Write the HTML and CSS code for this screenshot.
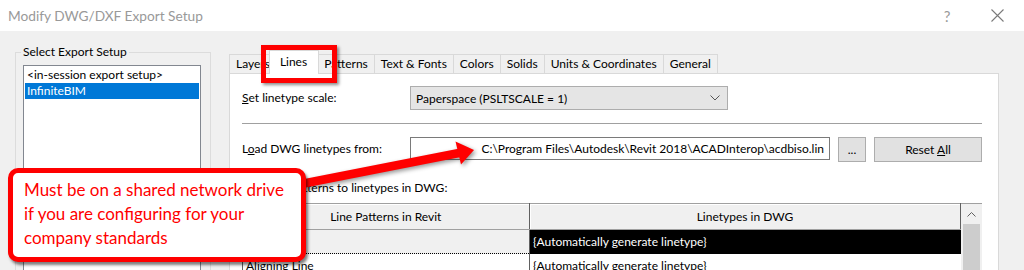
FILE: index.html
```html
<!DOCTYPE html>
<html lang="en">
<head>
    <meta charset="UTF-8">
    <title>Modify DWG/DXF Export Setup</title>
    <link rel="stylesheet" href="styles.css">
</head>
<body>
    <div class="dialog">
        <header class="titlebar">
            <span class="title">Modify DWG/DXF Export Setup</span>
            <span class="help">?</span>
            <span class="close">
                <svg width="13" height="13" viewBox="0 0 13 13"><path d="M0.5 0.5L12.5 12.5M12.5 0.5L0.5 12.5" stroke="#7a7a7a" stroke-width="1.1" fill="none"/></svg>
            </span>
        </header>

        <div class="content">
            <fieldset class="setup-group">
                <legend>Select Export Setup</legend>
                <ul class="setup-list">
                    <li>&lt;in-session export setup&gt;</li>
                    <li class="selected">InfiniteBIM</li>
                </ul>
            </fieldset>

            <section class="tabs">
                <nav class="tab-strip">
                    <span class="tab">Layers</span>
                    <span class="tab active">Lines<span class="mark"></span></span>
                    <span class="tab">Patterns</span>
                    <span class="tab">Text &amp; Fonts</span>
                    <span class="tab">Colors</span>
                    <span class="tab">Solids</span>
                    <span class="tab">Units &amp; Coordinates</span>
                    <span class="tab">General</span>
                </nav>
                <div class="panel">
                    <div class="field-row">
                        <label class="field-label"><u>S</u>et linetype scale:</label>
                        <div class="select">
                            <span>Paperspace (PSLTSCALE = 1)</span>
                            <svg width="10" height="6" viewBox="0 0 10 6"><path d="M0.5 0.5L5 5L9.5 0.5" stroke="#555" fill="none"/></svg>
                        </div>
                    </div>
                    <hr class="separator">
                    <div class="field-row">
                        <label class="field-label">L<u>o</u>ad DWG linetypes from:</label>
                        <div class="path-input">C:\Program Files\Autodesk\Revit 2018\ACADInterop\acdbiso.lin</div>
                        <button class="btn browse">...</button>
                        <button class="btn reset">Reset <u>A</u>ll</button>
                    </div>
                    <p class="map-label">Map line patterns to linetypes in DWG:</p>
                    <div class="grid-wrap">
                        <table class="map-table">
                            <colgroup><col class="col-revit"><col class="col-dwg"></colgroup>
                            <thead>
                                <tr><th>Line Patterns in Revit</th><th>Linetypes in DWG</th></tr>
                            </thead>
                            <tbody>
                                <tr><td class="focus"></td><td class="picked">{Automatically generate linetype}</td></tr>
                                <tr><td>Aligning Line</td><td>{Automatically generate linetype}</td></tr>
                            </tbody>
                        </table>
                        <div class="scrollbar">
                            <svg class="scroll-up" width="9" height="5" viewBox="0 0 9 5"><path d="M0.5 4.5L4.5 0.5L8.5 4.5" stroke="#606060" fill="none"/></svg>
                            <div class="thumb"></div>
                        </div>
                    </div>
                </div>
            </section>
        </div>

        <!-- annotation arrow, drawn over the dialog -->
        <svg class="arrow" width="1024" height="270" viewBox="0 0 1024 270">
            <line x1="296" y1="185" x2="459" y2="153" stroke="#f00" stroke-width="8.5"/>
            <polygon points="474,150 455.5,141.5 461,164.5" fill="#f00"/>
        </svg>

        <div class="callout">
            Must be on a shared network drive<br>
            if you are configuring for your<br>
            company standards
        </div>
    </div>
</body>
</html>
```

FILE: styles.css
```css
* {
    margin: 0;
    padding: 0;
    box-sizing: border-box;
}
body {
    font-family: Lato, "Liberation Sans", sans-serif;
    font-size: 12px;
    color: #000;
    background-color: #f0f0f0;
    overflow: hidden;
}
.dialog {
    position: relative;
    width: 1024px;
    height: 270px;
    overflow: hidden;
}
.titlebar {
    height: 31px;
    background-color: #fff;
    display: flex;
    align-items: center;
    padding-left: 8px;
}
.title {
    flex: 1;
    font-size: 13.7px;
    color: #999;
}
.help {
    width: 46px;
    text-align: center;
    font-size: 15px;
    color: #9a9a9a;
}
.close {
    width: 54px;
    display: flex;
    justify-content: center;
}
.content {
    display: flex;
    align-items: flex-start;
    padding-top: 13px;
}
.setup-group {
    margin-left: 15px;
    width: 196px;
    height: 260px;
    border: 1px solid #dcdcdc;
    padding: 0 0 0 5px;
}
.setup-group legend {
    padding: 0 2px;
    line-height: 16px;
}
.setup-list {
    list-style: none;
    margin: 5px 0 0 2px;
    width: 178px;
    height: 220px;
    background-color: #fff;
    border: 1px solid #828790;
    padding: 1px;
}
.setup-list li {
    height: 16px;
    line-height: 16px;
    padding-left: 2px;
}
.setup-list .selected {
    background-color: #0078d7;
    color: #fff;
}
.tabs {
    margin-left: 18px;
    padding-top: 6px;
    width: 770px;
}
.tab-strip {
    display: flex;
    align-items: flex-end;
    height: 23px;
}
.tab {
    position: relative;
    height: 19px;
    line-height: 18px;
    padding: 0 6px;
    background-color: #f0f0f0;
    border: 1px solid #d9d9d9;
    border-bottom: none;
    margin-right: -1px;
}
.tab.active {
    height: 24px;
    line-height: 22px;
    margin: 0 -2px -1px -7px;
    padding: 0 11px 0 10px;
    background-color: #fff;
    z-index: 2;
}
.mark {
    position: absolute;
    left: -9px;
    top: -6px;
    width: 76px;
    height: 38px;
    border: 5px solid #f00;
    box-shadow: 2px 2px 3px rgba(0,0,0,0.45);
}
.panel {
    background-color: #fff;
    border: 1px solid #d9d9d9;
    height: 210px;
    padding: 12px 16px 0 12px;
}
.field-row {
    display: flex;
    align-items: flex-start;
    gap: 8px;
}
.field-label {
    width: 160px;
    line-height: 23px;
}
.select {
    width: 318px;
    height: 24px;
    display: flex;
    align-items: center;
    justify-content: space-between;
    padding: 0 7px 0 5px;
    background-color: #e5e5e5;
    border: 1px solid #adadad;
}
.separator {
    border: none;
    border-top: 1px solid #a0a0a0;
    margin: 13px 0;
}
.path-input {
    width: 420px;
    height: 23px;
    line-height: 21px;
    text-align: right;
    padding-right: 5px;
    white-space: nowrap;
    overflow: hidden;
    background-color: #fff;
    border: 1px solid #7a7a7a;
}
.btn {
    height: 25px;
    font-family: inherit;
    font-size: 12px;
    background-color: #e1e1e1;
    border: 1px solid #adadad;
}
.browse {
    width: 28px;
}
.reset {
    width: 108px;
}
.map-label {
    margin-top: 18px;
    line-height: 16px;
}
.grid-wrap {
    display: flex;
    align-items: flex-start;
    margin-top: 7px;
    width: 740px;
}
.map-table {
    width: 719px;
    table-layout: fixed;
    border-collapse: collapse;
}
.col-revit {
    width: 287px;
}
.map-table th {
    height: 26px;
    padding: 0;
    font-weight: normal;
    background-color: #f0f0f0;
    border-top: 1px solid #a0a0a0;
    border-bottom: 1px solid #a0a0a0;
    border-right: 1px solid #606060;
    box-shadow: inset 1px 1px 0 #fff;
}
.map-table td {
    height: 24px;
    padding: 0 3px;
    line-height: 20px;
    white-space: nowrap;
}
.map-table td:first-child {
    border-left: 1px solid #606060;
    border-right: 1px solid #606060;
}
.map-table .focus {
    background-color: #f0f0f0;
    border-top: 1px dotted #000;
    border-bottom: 1px dotted #000;
}
.map-table .picked {
    background-color: #000;
    color: #fff;
}
.scrollbar {
    width: 21px;
    height: 80px;
    background-color: #f0f0f0;
    border-top: 1px solid #a0a0a0;
    display: flex;
    flex-direction: column;
    align-items: center;
}
.scroll-up {
    margin-top: 8px;
}
.thumb {
    margin-top: 7px;
    width: 17px;
    flex: 1;
    background-color: #cdcdcd;
}
.arrow {
    position: absolute;
    left: 0;
    top: 0;
    filter: drop-shadow(2px 2px 2px rgba(0,0,0,0.4));
    z-index: 4;
}
.callout {
    position: absolute;
    left: 8px;
    top: 168px;
    width: 298px;
    height: 94px;
    padding: 5px 0 0 11px;
    background-color: #fff;
    border: 5px solid #f00;
    border-radius: 10px;
    box-shadow: 2px 3px 3px rgba(0,0,0,0.5);
    color: #f00;
    font-size: 17px;
    line-height: 24px;
    z-index: 5;
}
```
